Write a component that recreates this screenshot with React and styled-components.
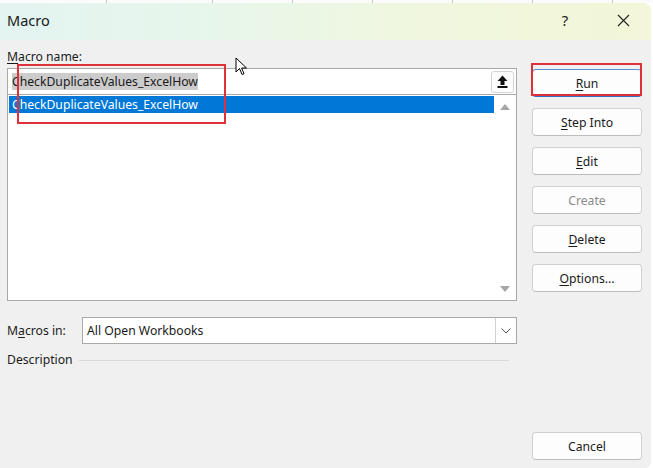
import styled, { createGlobalStyle } from "styled-components";

const Global = createGlobalStyle`
  html, body { margin: 0; padding: 0; background: #ffffff; }
  body { width: 653px; height: 468px; overflow: hidden; font-family: "Noto Sans", "Open Sans", sans-serif; }
  * { box-sizing: border-box; }
`;

const Sheet = styled.div`
  position: relative;
  width: 653px;
  height: 468px;
  background: #ffffff;
  overflow: hidden;
`;

const GridStrip = styled.div`
  height: 3px;
  display: flex;
  background: #fbfbfb;
`;

const GridCell = styled.div`
  width: ${(p) => p.w}px;
  border-right: 1px solid #c8c8c8;
  flex: none;
`;

const Dialog = styled.div`
  height: 465px;
  display: flex;
  flex-direction: column;
  background: #f0f0f0;
  border-top-right-radius: 8px;
  border-bottom-right-radius: 6px;
  margin-right: 2px;
  overflow: hidden;
  color: #1a1a1a;
`;

const TitleBar = styled.div`
  height: 37px;
  display: flex;
  align-items: center;
  padding-left: 7px;
  padding-bottom: 3px;
  background: linear-gradient(90deg, #e3f4f1 0%, #e8f6ea 35%, #f0f7de 65%, #f3f6d8 100%);
`;

const Title = styled.div`
  font-size: 14.5px;
  flex: 1;
`;

const TitleButton = styled.div`
  width: ${(p) => p.w}px;
  height: 34px;
  display: flex;
  align-items: center;
  justify-content: center;
  font-size: 15px;
  color: #222;
`;

const Body = styled.div`
  flex: 1;
  display: flex;
  padding-left: 7px;
`;

const LeftCol = styled.div`
  width: 510px;
  display: flex;
  flex-direction: column;
`;

const Label = styled.div`
  font-size: 12.2px;
  line-height: 16px;
  margin-top: ${(p) => p.mt || 0}px;
  white-space: nowrap;
  u { text-decoration: underline; text-underline-offset: 2px; }
`;

const NameInput = styled.div`
  margin-top: 3px;
  height: 26px;
  border: 1px solid #a9a9a9;
  border-bottom: none;
  background: #fff;
  display: flex;
  align-items: center;
  padding-left: 4px;
  padding-right: 2px;
`;

const InputText = styled.div`
  flex: 1;
  font-size: 12.2px;
`;

const Selected = styled.span`
  background: #cccccc;
  line-height: 18px;
`;

const UpButton = styled.div`
  width: 23px;
  height: 22px;
  border: 1px solid #d4d4d4;
  border-radius: 3px;
  display: flex;
  align-items: center;
  justify-content: center;
  background: #fdfdfd;
`;

const ListBox = styled.div`
  height: 207px;
  border: 1px solid #a9a9a9;
  background: #fff;
  display: flex;
  padding: 1px;
`;

const ListItems = styled.div`
  flex: 1;
`;

const ListItem = styled.div`
  height: 17px;
  line-height: 17px;
  padding-left: 3px;
  font-size: 12.2px;
  background: ${(p) => (p.active ? "#0078d7" : "transparent")};
  color: ${(p) => (p.active ? "#fff" : "#1a1a1a")};
`;

const ScrollBar = styled.div`
  width: 21px;
  display: flex;
  flex-direction: column;
  justify-content: space-between;
  align-items: center;
  padding: 7px 0 6px;
`;

const Row = styled.div`
  display: flex;
  align-items: center;
  margin-top: ${(p) => p.mt || 0}px;
`;

const Combo = styled.div`
  margin-left: auto;
  width: 435px;
  height: 27px;
  border: 1px solid #a9a9a9;
  background: #fff;
  display: flex;
  align-items: center;
  font-size: 12.2px;
  padding-left: 4px;
`;

const ComboText = styled.div`
  flex: 1;
`;

const ComboArrow = styled.div`
  width: 21px;
  height: 25px;
  border-left: 1px solid #d0d0d0;
  display: flex;
  align-items: center;
  justify-content: center;
`;

const Separator = styled.div`
  flex: 1;
  height: 1px;
  background: #d9d9d9;
  margin-left: 6px;
  margin-right: 8px;
`;

const RightCol = styled.div`
  margin-left: 15px;
  width: 110px;
  display: flex;
  flex-direction: column;
  gap: 11px;
  padding-top: 29px;
`;

const Button = styled.div`
  height: 28px;
  border: 1px solid ${(p) => (p.primary ? "#5b8fd0" : "#d0d0d0")};
  border-bottom-color: ${(p) => (p.primary ? "#2e6fc2" : "#bdbdbd")};
  border-radius: 4px;
  background: #fdfdfd;
  display: flex;
  align-items: center;
  justify-content: center;
  font-size: 12.2px;
  color: ${(p) => (p.disabled ? "#8a8a8a" : "#1a1a1a")};
  margin-top: ${(p) => p.mt || 0}px;
  u { text-decoration: underline; text-underline-offset: 2px; }
`;

const Marker = styled.div`
  position: absolute;
  left: ${(p) => p.x}px;
  top: ${(p) => p.y}px;
  width: ${(p) => p.w}px;
  height: ${(p) => p.h}px;
  border: 2px solid #e0303a;
  pointer-events: none;
`;

const Cursor = styled.svg`
  position: absolute;
  left: 235px;
  top: 57px;
`;

const Triangle = ({ up }) => (
  <svg width="10" height="7" viewBox="0 0 10 7">
    <path d={up ? "M0 7 L5 1 L10 7 Z" : "M0 0 L10 0 L5 6 Z"} fill="#a6a6a6" />
  </svg>
);

export default function App() {
  const cells = [107, 106, 80, 80, 80, 80, 80, 80];
  return (
    <Sheet>
      <Global />
      <GridStrip>
        {cells.map((w, i) => (
          <GridCell key={i} w={w} />
        ))}
      </GridStrip>
      <Dialog>
        <TitleBar>
          <Title>Macro</Title>
          <TitleButton w={66}>?</TitleButton>
          <TitleButton w={50}>
            <svg width="13" height="13" viewBox="0 0 13 13">
              <path d="M1 1 L12 12 M12 1 L1 12" stroke="#222" strokeWidth="1.1" />
            </svg>
          </TitleButton>
          <div style={{ width: 3 }} />
        </TitleBar>
        <Body>
          <LeftCol>
            <Label mt={9}>
              <u>M</u>acro name:
            </Label>
            <NameInput>
              <InputText>
                <Selected>CheckDuplicateValues_ExcelHow</Selected>
              </InputText>
              <UpButton>
                <svg width="11" height="13" viewBox="0 0 11 13">
                  <path d="M5.5 0.5 L10.5 6 L7.5 6 L7.5 10 L3.5 10 L3.5 6 L0.5 6 Z" fill="#111" />
                  <rect x="0.5" y="11" width="10" height="2" fill="#111" />
                </svg>
              </UpButton>
            </NameInput>
            <ListBox>
              <ListItems>
                <ListItem active>CheckDuplicateValues_ExcelHow</ListItem>
              </ListItems>
              <ScrollBar>
                <Triangle up />
                <Triangle />
              </ScrollBar>
            </ListBox>
            <Row mt={16}>
              <Label>
                M<u>a</u>cros in:
              </Label>
              <Combo>
                <ComboText>All Open Workbooks</ComboText>
                <ComboArrow>
                  <svg width="10" height="6" viewBox="0 0 10 6">
                    <path d="M0.5 0.5 L5 5 L9.5 0.5" stroke="#555" strokeWidth="1" fill="none" />
                  </svg>
                </ComboArrow>
              </Combo>
            </Row>
            <Row mt={8}>
              <Label>Description</Label>
              <Separator />
            </Row>
          </LeftCol>
          <RightCol>
            <Button primary>
              <u>R</u>un
            </Button>
            <Button>
              <u>S</u>tep Into
            </Button>
            <Button>
              <u>E</u>dit
            </Button>
            <Button disabled>Create</Button>
            <Button>
              <u>D</u>elete
            </Button>
            <Button>
              <u>O</u>ptions...
            </Button>
            <Button mt={129}>Cancel</Button>
          </RightCol>
        </Body>
      </Dialog>
      <Marker x={17} y={64} w={209} h={60} />
      <Marker x={531} y={63} w={111} h={33} />
      <Cursor width="13" height="20" viewBox="0 0 13 20">
        <path
          d="M1 1 L1 15 L4.5 11.5 L7 17.5 L9 16.7 L6.6 11 L11.5 11 Z"
          fill="#fff"
          stroke="#000"
          strokeWidth="1"
          strokeLinejoin="round"
        />
      </Cursor>
    </Sheet>
  );
}
